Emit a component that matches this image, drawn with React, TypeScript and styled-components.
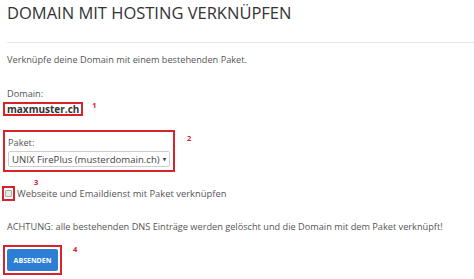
import React from 'react';
import styled, { createGlobalStyle } from 'styled-components';

const GlobalStyle = createGlobalStyle`
  body {
    margin: 0;
    background: #fff;
    font-family: "Open Sans", "DejaVu Sans", sans-serif;
  }
`;

const Page = styled.div`
  padding: 0 0 0 7px;
  color: #555;
  font-size: 9.2px;
`;

const Title = styled.h1`
  margin: 0;
  padding-top: 2px;
  font-size: 16.5px;
  line-height: 22px;
  font-weight: 400;
  color: #333;
`;

const Rule = styled.hr`
  margin: 18px 0 0;
  border: 0;
  border-top: 1px solid #e8e8e8;
`;

const Text = styled.p<{ $top: number }>`
  margin: ${(p) => p.$top}px 0 0;
  line-height: 13px;
`;

const Annotated = styled.div<{ $top: number }>`
  display: flex;
  align-items: flex-start;
  margin-top: ${(p) => p.$top}px;
  margin-left: -4px;
`;

const Marker = styled.div<{ $pad?: string }>`
  border: 2px solid #d8232a;
  padding: ${(p) => p.$pad ?? '0 2px'};
`;

const Num = styled.span<{ $gap: number; $down?: number }>`
  margin-left: ${(p) => p.$gap}px;
  margin-top: ${(p) => p.$down ?? 0}px;
  color: #d8232a;
  font-weight: 700;
  font-size: 7.5px;
  line-height: 10px;
`;

const Label = styled.div`
  line-height: 13px;
`;

const DomainValue = styled.div`
  font-weight: 700;
  font-size: 10px;
  line-height: 10px;
  color: #333;
`;

const SelectBox = styled.div`
  display: inline-flex;
  align-items: center;
  gap: 3px;
  margin: 2px 0 3px 0;
  padding: 0 3px;
  height: 14px;
  border: 1px solid #ccc;
  border-radius: 2px;
  color: #444;
  font-size: 9.6px;
`;

const Caret = styled.span`
  font-size: 4.5px;
`;

const CheckRow = styled.div<{ $top: number }>`
  position: relative;
  display: flex;
  align-items: center;
  margin-top: ${(p) => p.$top}px;
`;

const CheckMark = styled.span`
  display: block;
  width: 5px;
  height: 5px;
  border: 1px solid #aaa;
  background: #e9e9e9;
  border-radius: 1px;
`;

const CheckBox = styled.div`
  border: 2px solid #d8232a;
  padding: 2px 1px;
  margin-left: -5px;
`;

const CheckLabel = styled.span`
  margin-left: 2px;
  font-size: 9.4px;
`;

const FloatNum = styled.span`
  position: absolute;
  left: 27px;
  top: -9px;
  color: #d8232a;
  font-weight: 700;
  font-size: 7.5px;
  line-height: 10px;
`;

const Button = styled.button`
  display: block;
  border: 0;
  border-radius: 2px;
  background: #2d7fd6;
  color: #fff;
  font-family: inherit;
  font-weight: 700;
  font-size: 7px;
  height: 22px;
  width: 51px;
  padding: 0;
  margin: 2px;
`;

export default function App() {
  return (
    <>
      <GlobalStyle />
      <Page>
        <Title>DOMAIN MIT HOSTING VERKNÜPFEN</Title>
        <Rule />
        <Text $top={10}>Verknüpfe deine Domain mit einem bestehenden Paket.</Text>
        <Text $top={21}>Domain:</Text>
        <Annotated $top={2}>
          <Marker>
            <DomainValue>maxmuster.ch</DomainValue>
          </Marker>
          <Num $gap={9} $down={-2}>1</Num>
        </Annotated>
        <Annotated $top={14}>
          <Marker $pad="4px 3px 0 3px">
            <Label>Paket:</Label>
            <SelectBox>
              UNIX FirePlus (musterdomain.ch) <Caret>▼</Caret>
            </SelectBox>
          </Marker>
          <Num $gap={12} $down={3}>2</Num>
        </Annotated>
        <CheckRow $top={14}>
          <CheckBox>
            <CheckMark />
          </CheckBox>
          <CheckLabel>Webseite und Emaildienst mit Paket verknüpfen</CheckLabel>
          <FloatNum>3</FloatNum>
        </CheckRow>
        <Text $top={19}>ACHTUNG: alle bestehenden DNS Einträge werden gelöscht und die Domain mit dem Paket verknüpft!</Text>
        <Annotated $top={12}>
          <Marker $pad="0">
            <Button>ABSENDEN</Button>
          </Marker>
          <Num $gap={11} $down={-1}>4</Num>
        </Annotated>
      </Page>
    </>
  );
}
